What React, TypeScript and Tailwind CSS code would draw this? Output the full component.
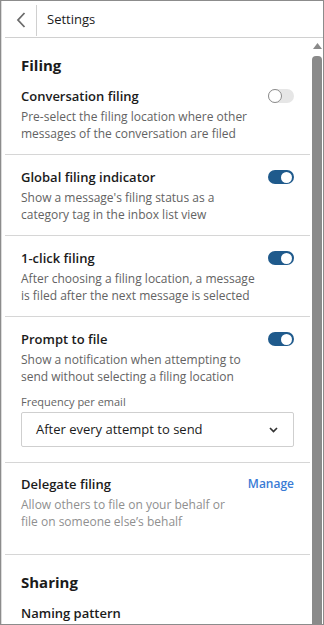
import { ReactNode } from 'react';

type ToggleProps = { on: boolean };

const Toggle = ({ on }: ToggleProps) =>
	on ? (
		<div className="flex h-[14px] w-[26px] shrink-0 items-center justify-end rounded-full bg-[#1f5a8c] pr-[2px]">
			<div className="h-[11px] w-[11px] rounded-full bg-white" />
		</div>
	) : (
		<div className="flex h-[14px] w-[26px] shrink-0 items-center rounded-full bg-[#e6e6e6]">
			<div className="h-[14px] w-[14px] rounded-full border border-[#8a8a8a] bg-white" />
		</div>
	);

type SettingProps = {
	title: string;
	lines: string[];
	right?: ReactNode;
	muted?: boolean;
};

const Setting = (props: SettingProps) => (
	<div>
		<div className="flex items-start justify-between gap-3">
			<h3 className="text-[13px] leading-[20px] font-semibold text-[#1b1b1b]">
				{props.title}
			</h3>
			<div className="pt-[3px]">{props.right}</div>
		</div>
		<p
			className={`mt-[2px] text-[12px] leading-[17px] ${
				props.muted ? 'text-[#8f8f8f]' : 'text-[#636363]'
			}`}
		>
			{props.lines.map(line => (
				<span key={line} className="block whitespace-nowrap">
					{line}
				</span>
			))}
		</p>
	</div>
);

const Divider = () => <div className="h-px bg-[#d6d6d6]" />;

export default function App() {
	return (
		<div
			className="flex h-[625px] w-[324px] flex-col overflow-hidden border border-[#8c8c8c] bg-white"
			style={{ fontFamily: '"Open Sans", "Noto Sans", sans-serif' }}
		>
			<div className="flex min-h-0 flex-1 flex-col border-l border-[#dcdcdc] pl-[3px]">
				<header className="flex h-[37px] shrink-0 items-center border-b border-[#d0d0d0] pt-[2px]">
					<button className="flex h-[31px] w-[32px] items-center justify-center border-r border-[#d0d0d0]">
						<svg width="10" height="16" viewBox="0 0 10 16" fill="none">
							<path
								d="M8.5 1 L2 8 L8.5 15"
								stroke="#6b6b6b"
								strokeWidth="1.8"
							/>
						</svg>
					</button>
					<span className="pl-[10px] text-[13px] text-[#1b1b1b]">
						Settings
					</span>
				</header>

				<div className="flex min-h-0 flex-1">
					<main className="w-[305px] shrink-0">
						<section className="px-4 pt-[15px] pb-[12px]">
							<h2 className="text-[15px] leading-[24px] font-bold text-[#1b1b1b]">
								Filing
							</h2>
							<div className="mt-[9px]">
								<Setting
									title="Conversation filing"
									lines={[
										'Pre-select the filing location where other',
										'messages of the conversation are filed'
									]}
									right={<Toggle on={false} />}
								/>
							</div>
						</section>
						<Divider />
						<section className="px-4 pt-3 pb-3">
							<Setting
								title="Global filing indicator"
								lines={[
									"Show a message's filing status as a",
									'category tag in the inbox list view'
								]}
								right={<Toggle on />}
							/>
						</section>
						<Divider />
						<section className="px-4 pt-3 pb-3">
							<Setting
								title="1-click filing"
								lines={[
									'After choosing a filing location, a message',
									'is filed after the next message is selected'
								]}
								right={<Toggle on />}
							/>
						</section>
						<Divider />
						<section className="px-4 pt-3 pb-[15px]">
							<Setting
								title="Prompt to file"
								lines={[
									'Show a notification when attempting to',
									'send without selecting a filing location'
								]}
								right={<Toggle on />}
							/>
							<label className="mt-[9px] block text-[11px] leading-[16px] text-[#636363]">
								Frequency per email
							</label>
							<div className="mt-[2px] flex h-[35px] items-center justify-between rounded-[2px] border border-[#cfcfcf] pr-[15px] pl-[14px]">
								<span className="text-[13px] text-[#1b1b1b]">
									After every attempt to send
								</span>
								<svg width="9" height="6" viewBox="0 0 9 6" fill="none">
									<path d="M1 1 L4.5 4.5 L8 1" stroke="#333" strokeWidth="1.7" />
								</svg>
							</div>
						</section>
						<Divider />
						<section className="px-4 pt-[11px] pb-[24px]">
							<Setting
								title="Delegate filing"
								muted
								lines={[
									'Allow others to file on your behalf or',
									'file on someone else’s behalf'
								]}
								right={
									<a className="-mt-[3px] block text-[12px] leading-[20px] font-semibold text-[#3a7bd5]">
										Manage
									</a>
								}
							/>
						</section>
						<Divider />
						<section className="px-4 pt-[15px]">
							<h2 className="text-[15px] leading-[24px] font-bold text-[#1b1b1b]">
								Sharing
							</h2>
							<h3 className="mt-[9px] text-[13px] leading-[20px] font-semibold text-[#1b1b1b]">
								Naming pattern
							</h3>
						</section>
					</main>

					<div className="ml-[2px] flex w-[10px] flex-col items-center pt-[5px]">
						<svg width="9" height="6" viewBox="0 0 9 6">
							<path d="M4.5 0 L9 6 L0 6 Z" fill="#8a8a8a" />
						</svg>
						<div className="mt-[7px] w-[10px] flex-1 rounded-t-[4px] bg-[#8a8a8a]" />
					</div>
				</div>
			</div>
		</div>
	);
}
